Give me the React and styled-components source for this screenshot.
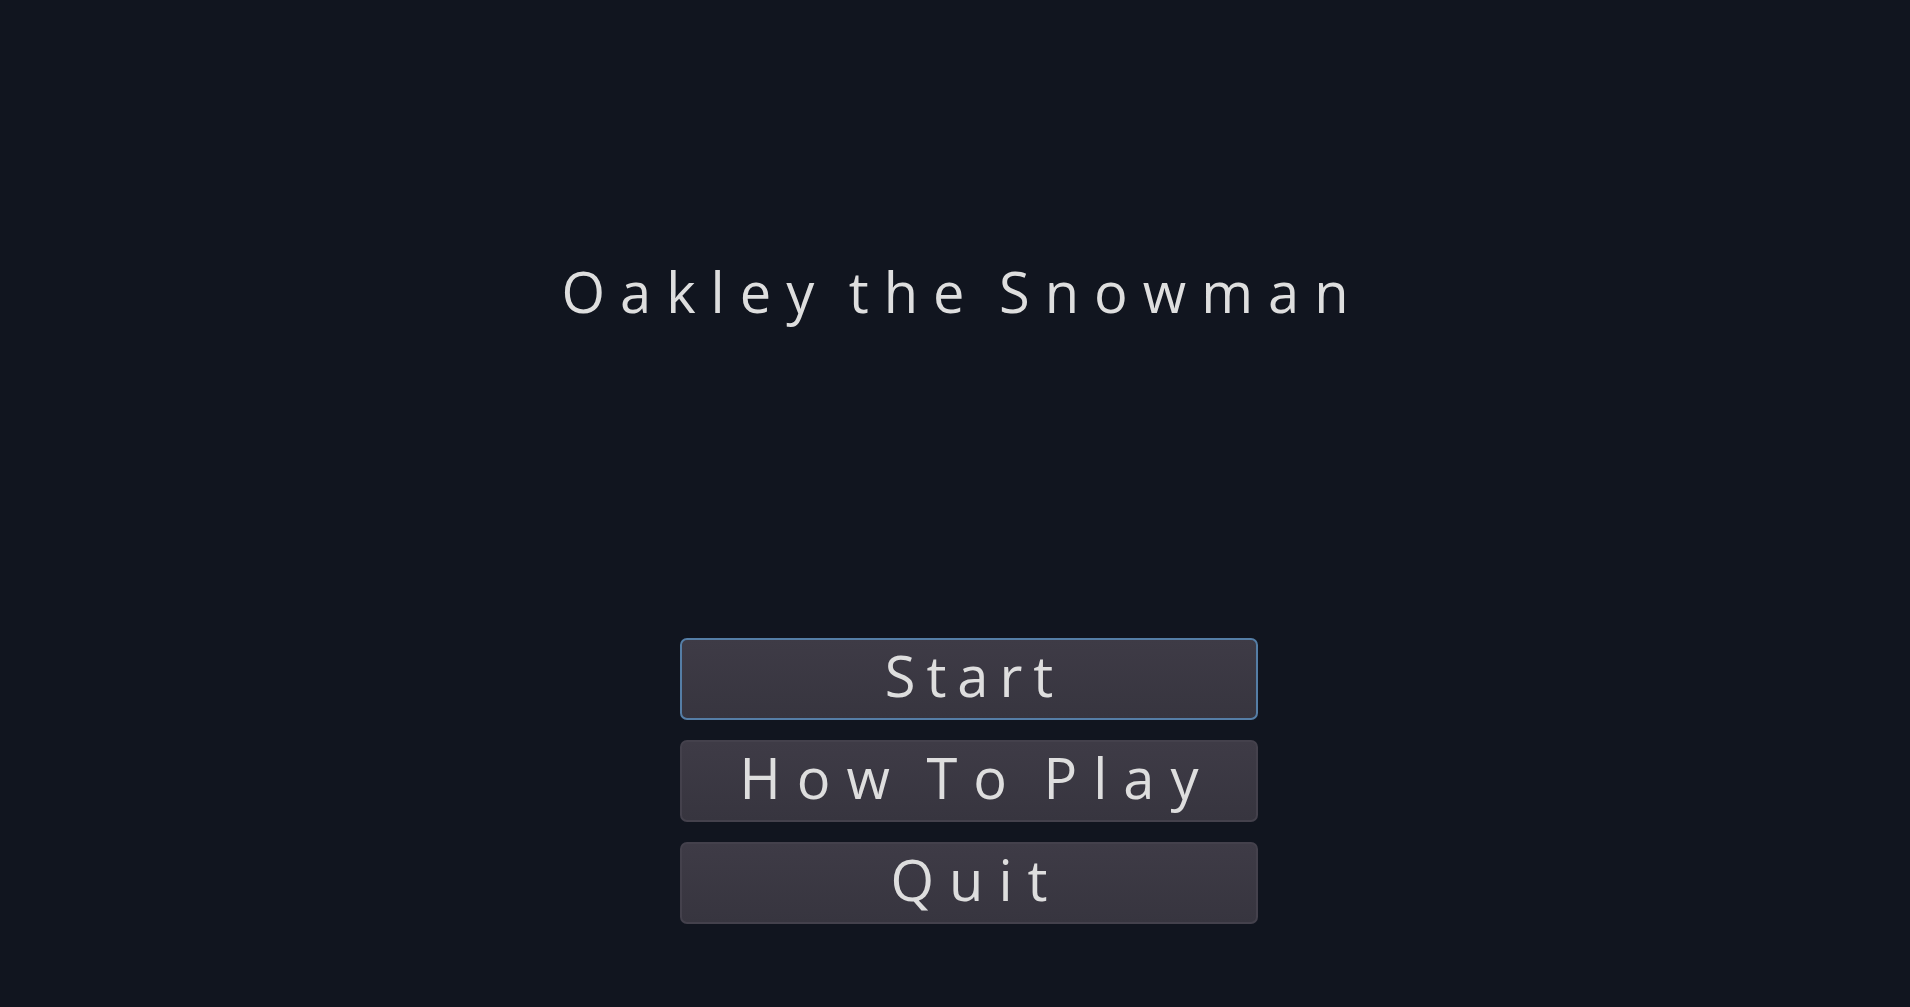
import React from 'react'
import styled, { createGlobalStyle } from 'styled-components'

const GlobalStyle = createGlobalStyle`
  html, body {
    margin: 0;
    padding: 0;
    background: #11151f;
  }
  #root {
    min-height: 100vh;
  }
`

function App() {
  return (
    <>
      <GlobalStyle />
      <Screen>
        <Title>Oakley the Snowman</Title>
        <Menu>
          <MenuButton focused spread={11}>Start</MenuButton>
          <MenuButton>How To Play</MenuButton>
          <MenuButton spread={15}>Quit</MenuButton>
        </Menu>
      </Screen>
    </>
  )
}

export default App

const Screen = styled.div`
  width: 100%;
  height: 100vh;
  box-sizing: border-box;
  padding-top: 263px;
  display: flex;
  flex-direction: column;
  align-items: center;
  background: #11151f;
  font-family: "Open Sans", "Noto Sans", sans-serif;
  color: #dedede;
`

const Title = styled.h1`
  margin: 0;
  font-size: 56px;
  font-weight: 400;
  line-height: 1;
  letter-spacing: 15px;
  word-spacing: -10px;
  text-indent: 15px;
`

const Menu = styled.div`
  margin-top: 319px;
  margin-left: 28px;
  display: flex;
  flex-direction: column;
  gap: 20px;
`

// spread = tracking of the label; menu labels are drawn wide
const MenuButton = styled.button`
  width: 578px;
  height: 82px;
  box-sizing: border-box;
  padding: 0 0 12px;
  border-radius: 7px;
  border: 2px solid ${p => (p.focused ? '#557ea6' : '#44414c')};
  background: linear-gradient(#3e3b46, #37353f);
  color: #dedede;
  font-family: inherit;
  font-size: 56px;
  line-height: 70px;
  letter-spacing: ${p => p.spread || 16}px;
  word-spacing: -10px;
  text-indent: ${p => p.spread || 16}px;
  white-space: nowrap;
  cursor: pointer;
`
